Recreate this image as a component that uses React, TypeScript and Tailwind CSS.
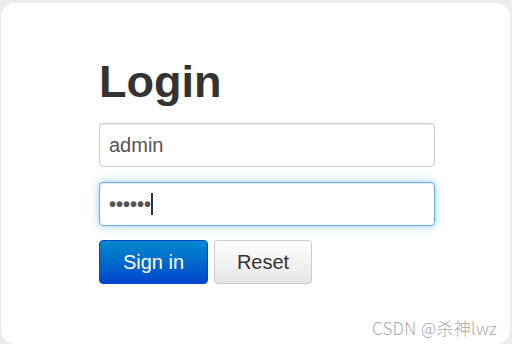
import { useState } from 'react';

export default function App() {
  const [user, setUser] = useState('admin');

  return (
    <div className="flex h-[344px] w-[512px] flex-col overflow-hidden bg-[#ececec] pl-px pr-[2px] pt-[3px] font-['Liberation_Sans',Arial,sans-serif]">
      <div className="relative flex flex-1 flex-col rounded-[14px] bg-white pl-[98px] pt-[54px]">
        <h1 className="text-[45px] font-bold leading-[49px] text-[#333]">Login</h1>
        <form className="mt-[17px] flex w-[336px] flex-col" onSubmit={(e) => e.preventDefault()}>
          <input
            className="h-[44px] rounded border border-[#ccc] bg-white px-[9px] text-[20px] text-[#555] shadow-[inset_0_1px_1px_rgba(0,0,0,0.075)] outline-none"
            value={user}
            onChange={(e) => setUser(e.target.value)}
          />
          <div className="mt-[15px] flex h-[44px] items-center rounded border border-[#66afe9] bg-white px-[9px] shadow-[inset_0_1px_1px_rgba(0,0,0,0.075),0_0_8px_rgba(82,168,236,0.6)]">
            <span className="text-[20px] leading-none font-bold text-[#555]">••••••</span>
            <span className="h-[22px] w-[2px] bg-[#333]" />
          </div>
          <div className="mt-[14px] flex gap-[6px]">
            <button className="h-[44px] w-[109px] rounded border border-[#0044cc] bg-gradient-to-b from-[#0088cc] to-[#0044cc] text-[20px] text-white">
              Sign in
            </button>
            <button
              type="reset"
              className="h-[44px] w-[98px] rounded border border-[#ccc] bg-gradient-to-b from-white to-[#e6e6e6] text-[20px] text-[#333]"
            >
              Reset
            </button>
          </div>
        </form>
        <span className="absolute bottom-[4px] right-[13px] font-['Noto_Sans_CJK_SC',sans-serif] text-[17px] font-light tracking-[0.3px] text-[#aaa]">
          CSDN @杀神lwz
        </span>
      </div>
    </div>
  );
}
